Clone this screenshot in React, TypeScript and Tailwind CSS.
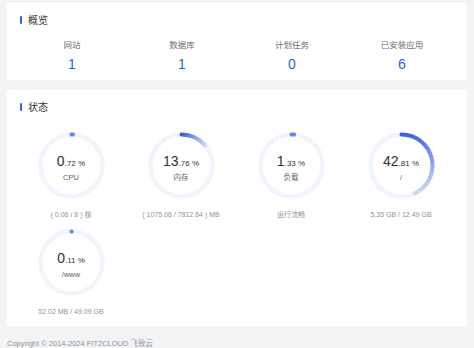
import React from "react";

const font = { fontFamily: '"Liberation Sans", "Noto Sans CJK SC", sans-serif' };

const stats = [
    { label: "网站", value: 1 },
    { label: "数据库", value: 1 },
    { label: "计划任务", value: 0 },
    { label: "已安装应用", value: 6 },
];

const rings = [
    { pct: 0.72, label: "CPU", detail: "( 0.06 / 8 ) 核" },
    { pct: 13.76, label: "内存", detail: "( 1075.06 / 7812.64 ) MB" },
    { pct: 1.33, label: "负载", detail: "运行流畅" },
    { pct: 42.81, label: "/", detail: "5.35 GB / 12.49 GB" },
    { pct: 0.11, label: "/www", detail: "52.02 MB / 49.09 GB" },
];

const SectionTitle = ({ text }: { text: string }) => (
    <div className="flex items-center h-[16px] px-[13px]">
        <span className="w-[2px] h-[8px] bg-[#2f62db] rounded-[1px]" />
        <span className="ml-[6px] text-[10px] text-[#303133]">{text}</span>
    </div>
);

const Ring = ({ pct, id }: { pct: number; id: number }) => {
    const c = 33.5;
    const r = 31;
    const a = (pct / 100) * Math.PI * 2;
    const ex = c + r * Math.sin(a);
    const ey = c - r * Math.cos(a);
    const large = pct > 50 ? 1 : 0;
    const small = Math.hypot(ex - c, ey - (c - r)) < 8;
    const d = `M ${c} ${c - r} A ${r} ${r} 0 ${large} 1 ${ex} ${ey}`;
    return (
        <svg width="67" height="67" viewBox="0 0 67 67">
            <defs>
                <linearGradient id={`g${id}`} gradientUnits="userSpaceOnUse" x1={c} y1={c - r} x2={ex} y2={ey}>
                    <stop offset="0%" stopColor="#3a5fe0" />
                    <stop offset="100%" stopColor="#c8daf8" />
                </linearGradient>
            </defs>
            <circle cx={c} cy={c} r={r} fill="#fff" stroke="#f0f4fc" strokeWidth="4.5" />
            <path d={d} fill="none" stroke={small ? "#6486e4" : `url(#g${id})`} strokeWidth="4" strokeLinecap="round" />
        </svg>
    );
};

export default function App() {
    return (
        <div className="min-h-screen bg-[#f2f3f5] px-[7px] pt-[3px]" style={font}>
            {/* 概览 */}
            <div className="bg-white rounded-[3px] pt-[9px] pb-[6px]">
                <SectionTitle text="概览" />
                <div className="grid grid-cols-4 px-[10px] mt-[10px]">
                    {stats.map((s) => (
                        <div key={s.label} className="flex flex-col items-center">
                            <span className="text-[8.5px] leading-[14px] text-[#6b6e73]">{s.label}</span>
                            <span className="mt-[2px] text-[14px] leading-[20px] text-[#2d63d8]">{s.value}</span>
                        </div>
                    ))}
                </div>
            </div>

            {/* 状态 */}
            <div className="mt-[10px] bg-white rounded-[3px] pt-[9px] pb-[8px]">
                <SectionTitle text="状态" />
                <div className="grid grid-cols-4 px-[10px] mt-[17px] gap-y-[8px]">
                    {rings.map((r, i) => {
                        const [whole, dec] = r.pct.toFixed(2).split(".");
                        return (
                            <div key={r.label} className="flex flex-col items-center -translate-x-[1px]">
                                <div className="relative w-[67px] h-[67px]">
                                    <Ring pct={r.pct} id={i} />
                                    <div className="absolute inset-0 flex flex-col items-center justify-center pt-[5px]">
                                        <div className="flex items-baseline text-[#303133]">
                                            <span className="text-[14px] leading-[16px]">{whole}</span>
                                            <span className="text-[8px]">.{dec} %</span>
                                        </div>
                                        <span className="mt-[3px] text-[7.5px] leading-[10px] text-[#606266]">{r.label}</span>
                                    </div>
                                </div>
                                <span className="mt-[10px] text-[7px] leading-[12px] text-[#8f9399] whitespace-nowrap">{r.detail}</span>
                            </div>
                        );
                    })}
                </div>
            </div>

            <div className="mt-[12px] text-[7.5px] leading-[12px] text-[#8f9399]">
                Copyright © 2014-2024 FIT2CLOUD 飞致云
            </div>
        </div>
    );
}
